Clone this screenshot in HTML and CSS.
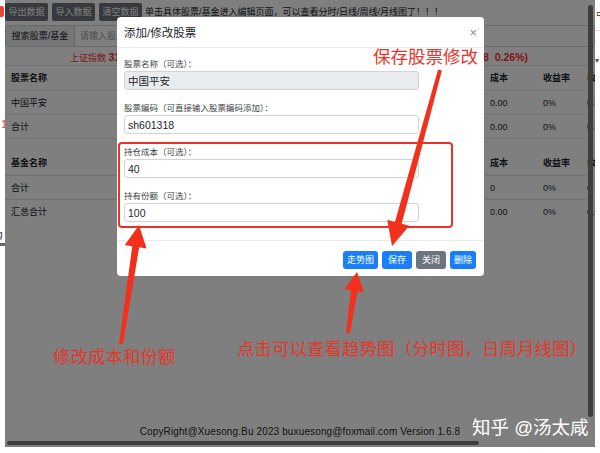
FILE: index.html
```html
<!DOCTYPE html>
<html lang="zh-CN">
<head>
<meta charset="utf-8">
<title>股票基金助手</title>
<link rel="stylesheet" href="styles.css">
</head>
<body>
<div class="screen">
  <div class="edge edge-left">
    <span class="frag-icon"></span>
    <span class="frag-mark">1</span>
    <span class="frag-text">g</span>
    <span class="frag-bar"></span>
  </div>

  <div class="popup">
    <div class="page">
      <div class="toolbar">
        <button class="tbtn">导出数据</button>
        <button class="tbtn">导入数据</button>
        <button class="tbtn">清空数据</button>
        <span class="tip">单击具体股票/基金进入编辑页面，可以查看分时/日线/周线/月线图了！！！</span>
      </div>
      <div class="search">
        <span class="addon">搜索股票/基金</span>
        <span class="search-input">请输入股票/基金代码或名称，回车添加</span>
      </div>
      <div class="indices">
        <span class="idx">上证指数 <span class="num">3123.45(+8.11 0.26%)</span></span>
        <span class="idx">深证成指 <span class="num">10234.56(+26.78 0.26%)</span></span>
        <span class="idx">创业板指 <span class="num">2012.34(+5.08&nbsp;&nbsp;0.26%)</span></span>
      </div>

      <div class="tbl">
        <div class="row head"><span>股票名称</span><span>当前价</span><span>涨跌幅</span><span>持有份额</span><span>市值</span><span>成本</span><span>收益率</span><span>收益</span><span>当日收益</span></div>
        <div class="row"><span>中国平安</span><span>0.00</span><span>0%</span><span>100</span><span>0.00</span><span>0.00</span><span>0%</span><span>0.00</span><span>0.00</span></div>
        <div class="row"><span>合计</span><span></span><span></span><span></span><span>0.00</span><span>0.00</span><span>0%</span><span>0.00</span><span>0.00</span></div>
      </div>

      <div class="tbl funds">
        <div class="row head"><span>基金名称</span><span>估算净值</span><span>涨跌幅</span><span>持有份额</span><span>市值</span><span>成本</span><span>收益率</span><span>收益</span><span>当日收益</span></div>
        <div class="row"><span>合计</span><span></span><span></span><span></span><span>0</span><span>0</span><span>0%</span><span>0</span><span>0</span></div>
        <div class="row last"><span>汇总合计</span><span></span><span></span><span></span><span>0.00</span><span>0.00</span><span>0%</span><span>0.00</span><span>0.00</span></div>
      </div>

      <div class="copyright">CopyRight@Xuesong.Bu 2023 buxuesong@foxmail.com Version 1.6.8</div>
    </div>

    <div class="backdrop"></div>
    <div class="vscroll"></div>
    <div class="hscroll"></div>

    <div class="modal">
      <div class="modal-header">
        <span class="modal-title">添加/修改股票</span>
        <span class="close">×</span>
      </div>
      <div class="modal-body">
        <div class="field">
          <label>股票名称（可选）：</label>
          <input class="ctl is-disabled" value="中国平安" readonly>
        </div>
        <div class="field">
          <label>股票编码（可直接输入股票编码添加）：</label>
          <input class="ctl" value="sh601318" readonly>
        </div>
        <div class="field">
          <label>持仓成本（可选）：</label>
          <input class="ctl" value="40" readonly>
        </div>
        <div class="field">
          <label>持有份额（可选）：</label>
          <input class="ctl" value="100" readonly>
        </div>
      </div>
      <div class="modal-footer">
        <button class="btn btn-primary btn-trend">走势图</button>
        <button class="btn btn-primary">保存</button>
        <button class="btn btn-secondary">关闭</button>
        <button class="btn btn-primary btn-del">删除</button>
      </div>
    </div>
  </div>

  <div class="edge edge-right">
    <span class="frag-zh">中</span>
    <span class="frag-line"></span>
    <span class="frag-caret">▾</span>
  </div>

  <div class="mark-box"></div>
  <svg class="arrows" viewBox="0 0 600 453" width="600" height="453">
    <polygon points="441.93,70.53 401.69,223.76 409.41,225.87 392,246 387.21,219.81 394.93,221.92 438.07,69.47"/>
    <polygon points="122.98,344.30 139.17,247.27 146.59,248.40 139,225 124.83,245.10 132.25,246.23 119.02,343.70"/>
    <polygon points="349.98,333.29 357.49,291.28 364.12,292.26 357,272 344.34,289.34 350.97,290.32 346.02,332.71"/>
  </svg>
  <div class="note note-save">保存股票修改</div>
  <div class="note note-cost">修改成本和份额</div>
  <div class="note note-trend">点击可以查看趋势图（分时图，日周月线图）</div>
  <div class="watermark">知乎 @汤太咸</div>
</div>
</body>
</html>
```

FILE: styles.css
```css
* { box-sizing: border-box; margin: 0; padding: 0; }
html, body { width: 600px; height: 453px; overflow: hidden; }
body {
  background: #fff;
  font-family: "Liberation Sans", "Noto Sans CJK SC", sans-serif;
  color: #212529;
}

.screen {
  position: relative;
  width: 600px;
  height: 453px;
  display: flex;
  align-items: flex-start;
}

/* slivers of the page behind the popup */
.edge { height: 453px; overflow: hidden; flex: none; display: flex; flex-direction: column; }
.edge-left { width: 5px; }
.frag-icon { display: block; width: 4px; height: 11px; margin-top: 6px; background: #e8453c; border-radius: 0 2px 2px 0; }
.frag-mark { display: block; margin-top: 101px; margin-left: 1px; color: #e8453c; font-size: 11px; line-height: 12px; }
.frag-text { display: block; margin-top: 99px; margin-left: -3px; font-size: 10px; line-height: 12px; color: #333; }
.frag-bar { display: block; width: 5px; height: 3px; margin-top: 2px; background: #666; }
.edge-right { width: 5px; }
.frag-zh { display: block; margin-top: 9px; margin-left: 1px; font-size: 9px; line-height: 12px; color: #333; }
.frag-line { display: block; height: 1px; margin-top: 9px; background: #ddd; }
.frag-caret { display: block; margin-top: 25px; font-size: 8px; line-height: 10px; color: #555; }

/* popup page */
.popup {
  position: relative;
  width: 590px;
  height: 447px;
  overflow: hidden;
  background: #fff;
  flex: none;
}
.page {
  width: 590px;
  height: 447px;
  display: flex;
  flex-direction: column;
}
.toolbar {
  display: flex;
  align-items: center;
  gap: 4px;
  height: 22px;
  padding-top: 2px;
  white-space: nowrap;
  flex: none;
}
.tbtn {
  height: 18px;
  padding: 0 3.5px;
  border: 0;
  border-radius: 2px;
  background: #6c757d;
  color: #fff;
  font: 9px/18px "Liberation Sans", "Noto Sans CJK SC", sans-serif;
}
.tip { margin-left: -1px; font-size: 9px; line-height: 12px; color: #212529; }

.search { display: flex; height: 22px; margin-top: 3px; flex: none; }
.addon {
  width: 70px;
  background: #e9ecef;
  border: 1px solid #ced4da;
  border-radius: 3px 0 0 3px;
  font-size: 9px;
  line-height: 20px;
  text-align: center;
  white-space: nowrap;
}
.search-input {
  flex: 1;
  border: 1px solid #ced4da;
  border-left: 0;
  border-radius: 0 3px 3px 0;
  padding: 0 5px;
  font-size: 9px;
  line-height: 20px;
  color: #9a9a9a;
  white-space: nowrap;
}

.indices {
  height: 19px;
  padding: 3px 67px 0 65px;
  border-bottom: 1px solid #dee2e6;
  display: flex;
  justify-content: space-between;
  font-size: 9px;
  line-height: 14px;
  color: #ff2d2d;
  white-space: nowrap;
  flex: none;
}
.idx .num { font-size: 10.5px; font-weight: bold; }

.tbl { width: 696px; flex: none; font-size: 9px; color: #212529; }
.tbl.funds { margin-top: 12px; }
.row {
  display: grid;
  grid-template-columns: 119px 90px 90px 90px 90px 53px 44px 60px 60px;
  align-items: center;
  height: 24px;
  border-bottom: 1px solid #dee2e6;
  line-height: 12px;
  white-space: nowrap;
}
.row span { padding: 0 6px; overflow: hidden; }
.row.head { height: 25px; font-weight: bold; }
.row.last { border-bottom: 0; }

.copyright {
  margin-top: auto;
  padding-bottom: 9px;
  text-align: center;
  font-size: 10px;
  line-height: 12px;
  letter-spacing: 0.13px;
  color: #2a2a2a;
  white-space: nowrap;
  flex: none;
}

.backdrop { position: absolute; inset: 0; background: rgba(0, 0, 0, 0.5); }
.vscroll { position: absolute; left: 583px; top: 5px; width: 5px; height: 412px; border-radius: 3px; background: #3e3e3e; }
.hscroll { position: absolute; left: 2px; top: 441px; width: 472px; height: 4px; border-radius: 2px; background: #3e3e3e; }

/* modal */
.modal {
  position: absolute;
  left: 112px;
  top: 17px;
  width: 367px;
  height: 259px;
  background: #fff;
  border-radius: 4px;
  display: flex;
  flex-direction: column;
}
.modal-header {
  height: 31px;
  flex: none;
  display: flex;
  align-items: center;
  justify-content: space-between;
  padding: 2px 7px 0 7px;
  border-bottom: 1px solid #e9ecef;
}
.modal-title { font-size: 11.5px; line-height: 14px; color: #212529; }
.close { font-size: 13px; line-height: 14px; color: #8a8a8a; }
.modal-body { flex: 1; padding: 10px 7px 0; }
.field { margin-bottom: 12px; }
.field label { display: block; font-size: 8.5px; line-height: 12px; margin-bottom: 1px; color: #3a3f44; white-space: nowrap; }
.ctl {
  display: block;
  width: 295px;
  height: 19px;
  border: 1px solid #ced4da;
  border-radius: 3px;
  padding: 0 3px;
  font: 10.5px "Liberation Sans", "Noto Sans CJK SC", sans-serif;
  color: #212529;
  background: #fff;
  outline: none;
}
.ctl.is-disabled { background: #e9ecef; }
.modal-footer {
  height: 36px;
  flex: none;
  border-top: 1px solid #e9ecef;
  display: flex;
  justify-content: flex-end;
  align-items: center;
  gap: 4px;
  padding: 2px 8px 0 0;
}
.btn {
  height: 18px;
  border: 0;
  border-radius: 3px;
  padding: 0 6px;
  color: #fff;
  font: 9px/18px "Liberation Sans", "Noto Sans CJK SC", sans-serif;
}
.btn-primary { background: #1a7ff6; }
.btn-secondary { background: #6c757d; }
.btn-trend, .btn-del { padding: 0 4px; }

/* annotations drawn over the screenshot */
.mark-box {
  position: absolute;
  left: 118px;
  top: 142px;
  width: 335px;
  height: 86px;
  border: 2px solid #e8322a;
  border-radius: 4px;
}
.arrows { position: absolute; left: 0; top: 0; pointer-events: none; }
.arrows polygon { fill: #f2301c; }
.note {
  position: absolute;
  font-size: 17.5px;
  line-height: 20px;
  color: #e8352a;
  white-space: nowrap;
}
.note-save { left: 373px; top: 47px; }
.note-cost { left: 53px; top: 347px; }
.note-trend { left: 237px; top: 339px; }
.watermark {
  position: absolute;
  left: 472px;
  top: 417px;
  font-size: 18.5px;
  line-height: 22px;
  color: #fff;
  white-space: nowrap;
}
```
